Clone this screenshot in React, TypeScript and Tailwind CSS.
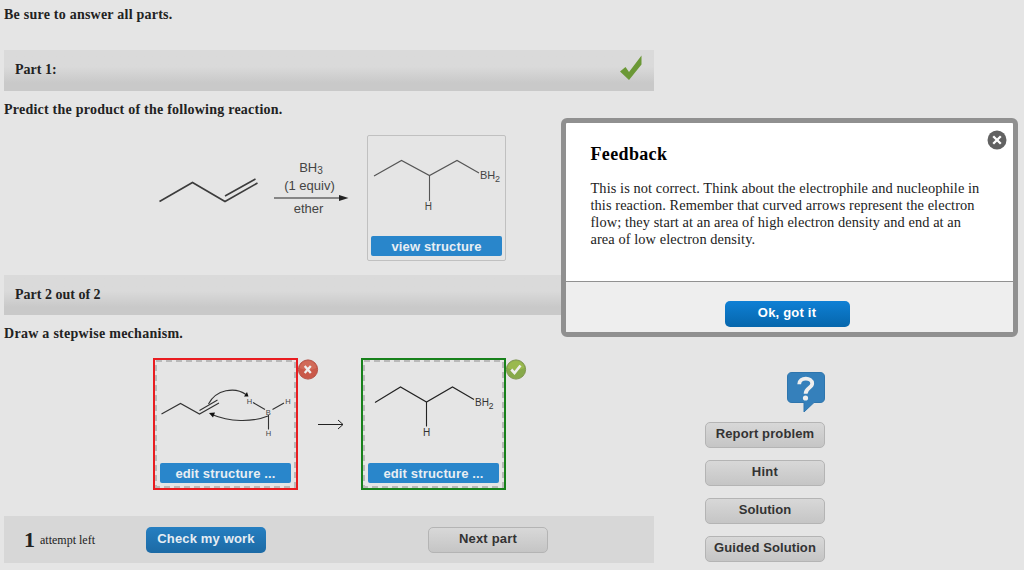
import React from "react";

const sideButtons = [
  { label: "Report problem", spacing: "tracking-[0.12px]" },
  { label: "Hint", spacing: "tracking-[0.3px]" },
  { label: "Solution", spacing: "tracking-[0.05px]" },
  { label: "Guided Solution", spacing: "tracking-[0.1px]" },
];

function PartBar({ title, height, children }: { title: string; height: string; children?: React.ReactNode }) {
  return (
    <div className={`${height} flex items-start justify-between bg-linear-to-b from-[#dadada] from-40% to-[#c9c9c9] to-80% pl-[11px] pr-[11px]`}>
      <h2 className="mt-3 text-[14px] font-bold leading-4 text-[#222]">{title}</h2>
      {children}
    </div>
  );
}

function GrayButton({ label, spacing }: { label: string; spacing: string }) {
  return (
    <button className={`${spacing} h-[26px] w-[120px] shrink-0 whitespace-nowrap rounded-[5px] border border-[#b4b4b4] bg-linear-to-b from-[#d8d8d8] to-[#c5c5c5] pb-0.5 font-['Liberation_Sans',sans-serif] text-[13px] font-bold leading-5 text-[#333]`}>
      {label}
    </button>
  );
}

function StructureButton({ label }: { label: string }) {
  return (
    <button className="block h-5 w-[131px] rounded-[2px] bg-[#2986cb] font-['Liberation_Sans',sans-serif] text-[13px] font-bold leading-[19px] tracking-[0.15px] text-[#e8eef3]">
      {label}
    </button>
  );
}

function Butene() {
  return (
    <svg width="105" height="30" viewBox="0 0 105 30" fill="none" stroke="#3c3c3c" strokeWidth="1.6">
      <path d="M4.5 25.5 37.5 6.5 70 25.5 102.5 7M70 20 100.5 3" />
    </svg>
  );
}

function Borane({ boxed }: { boxed?: boolean }) {
  if (boxed) {
    return (
      <svg className="block" width="138" height="95" viewBox="365 361.5 138 95">
        <path d="M375 402 400.5 386.5 426.5 401.5 452.5 386.5 474 399M426.5 401.5V426" fill="none" stroke="#222" strokeWidth="1.1" />
        <g fill="#333" fontFamily="Liberation Sans, sans-serif" fontSize="10">
          <text x="475" y="405.5">BH</text>
          <text x="488.8" y="408.5" fontSize="8.5">2</text>
          <text x="422.9" y="435">H</text>
        </g>
      </svg>
    );
  }
  return (
    <svg className="block" width="137" height="98" viewBox="368 136 137 98">
      <path d="M374 176 401.5 160.5 429.5 175.5 457 160.5 479 173M429.5 175.5V201" fill="none" stroke="#555" strokeWidth="1.1" />
      <g fill="#444" fontFamily="Liberation Sans, sans-serif" fontSize="11">
        <text x="480" y="178.5">BH</text>
        <text x="495" y="181.5" fontSize="9">2</text>
        <text x="424.8" y="210" fontSize="10">H</text>
      </g>
    </svg>
  );
}

function CurvedArrows() {
  return (
    <svg className="block" width="138" height="95" viewBox="157 361.5 138 95">
      <g fill="none" stroke="#333" strokeWidth="1.1">
        <path d="M161.5 413.5 180.5 403 199.5 413.5 219 402.5M199.5 410 217.5 399.5" />
        <path d="M208.5 403.5C216 389 235 386 246 394M268 415.5C252 422 229 421.5 212 414" />
        <path d="M253 402 265 409M272.5 409 284 402.5M268.5 414.5V429" />
      </g>
      <path d="M248.5 396 244 396 247 391.5ZM209 412.5 215 412 213 417Z" fill="#111" />
      <g fill="#444" fontFamily="Liberation Sans, sans-serif" fontSize="7.5">
        <text x="246.7" y="403.5">H</text>
        <text x="285.2" y="403.5">H</text>
        <text x="265.8" y="414.5">B</text>
        <text x="265.8" y="435.7">H</text>
      </g>
    </svg>
  );
}

function AnswerBox({ wrong, children }: { wrong?: boolean; children: React.ReactNode }) {
  return (
    <div className={`${wrong ? "border-[#e91c20]" : "border-[#17811b]"} relative h-[132px] w-[145px] border-2`}>
      <svg className="absolute inset-0" width="141" height="128" fill="none">
        <rect x="1" y="1" width="139" height="126" stroke="#b9b9b9" strokeWidth="2" strokeDasharray="6 4" />
      </svg>
      <div className="flex flex-col items-center pt-0.5">
        {children}
        <div className="mt-[6px]">
          <StructureButton label="edit structure ..." />
        </div>
      </div>
      <svg className="absolute -right-[23px] -top-[2px]" width="22" height="22" viewBox="0 0 22 22">
        <circle cx="11" cy="11.5" r="9.6" fill={wrong ? "#c95849" : "#87a94a"} stroke={wrong ? "#b55247" : "#80964f"} />
        <path d="M2.5 10a8.6 8.6 0 0 1 17 0Q11 14 2.5 10Z" fill={wrong ? "#d16a58" : "#9ab94e"} />
        {wrong ? (
          <path d="m7.7 8 6.1 7m0-7-6.1 7" stroke="#eee" strokeWidth="2.3" />
        ) : (
          <path d="m6.3 11.5 3.2 3.5 6-7.5" fill="none" stroke="#eee" strokeWidth="2.7" />
        )}
      </svg>
    </div>
  );
}

function FeedbackDialog() {
  return (
    <div role="dialog" className="absolute left-[561px] top-[118px] flex h-[219px] w-[457px] flex-col overflow-hidden rounded-md border-[5px] border-[#909090] bg-white">
      <svg className="absolute right-[6.5px] top-[6.5px]" width="20" height="20" viewBox="0 0 20 20">
        <circle cx="10" cy="10" r="9.5" fill="#626262" />
        <path d="m6.2 6.2 7.6 7.6m0-7.6-7.6 7.6" stroke="#fff" strokeWidth="2.3" />
      </svg>
      <div className="h-[159px] shrink-0 border-b border-[#919191] pl-[24.5px] pt-[21px]">
        <h3 className="text-[18px] font-bold leading-5 tracking-[0.35px] text-black">Feedback</h3>
        <p className="mt-[16px] whitespace-nowrap text-[14.4px] leading-[17px] tracking-[0.075px] text-[#222]">
          This is not correct. Think about the electrophile and nucleophile in<br />
          this reaction. Remember that curved arrows represent the electron<br />
          flow; they start at an area of high electron density and end at an<br />
          area of low electron density.
        </p>
      </div>
      <div className="flex grow items-start justify-center bg-[#eee] pr-[5px] pt-[19px]">
        <button className="h-[26px] w-[125px] rounded-[5px] bg-linear-to-b from-[#0f80d5] to-[#0666ac] pb-0.5 font-['Liberation_Sans',sans-serif] text-[13px] font-bold leading-5 tracking-[0.2px] text-white">
          Ok, got it
        </button>
      </div>
    </div>
  );
}

export default function App() {
  return (
    <div className="relative flex h-[570px] w-[1024px] overflow-hidden bg-[#e5e5e5] pl-1 font-['Liberation_Serif',serif] text-[#222]">
      <main className="w-[650px] shrink-0">
        <p className="h-[50px] pt-[7px] text-[14px] font-bold leading-4 tracking-[0.23px]">Be sure to answer all parts.</p>
        <PartBar title="Part 1:" height="h-[41px]">
          <svg className="mt-[5px]" width="24" height="27" viewBox="0 0 24 27">
            <path d="M1 16.5 6.5 12 10 17 22.5.5V9.5L10 25Z" fill="#6b9836" />
          </svg>
        </PartBar>
        <p className="h-11 pt-[11px] text-[14px] font-bold leading-4 tracking-[0.23px]">Predict the product of the following reaction.</p>

        <section className="flex h-[140px] items-start">
          <div className="ml-[151px] mt-[41px]">
            <Butene />
          </div>
          <div className="ml-[14px] mt-[24px] flex w-[76px] flex-col items-center font-['Liberation_Sans',sans-serif] text-[13px] leading-[17px] text-[#444]">
            <span className="-ml-[2px]">BH<span className="relative top-0.5 text-[10px]">3</span></span>
            <span className="-ml-[5px]">(1 equiv)</span>
            <svg width="76" height="8" viewBox="0 0 76 8">
              <path d="M0 4H67" stroke="#666" strokeWidth="1.3" />
              <path d="m65 1 9.5 3-9.5 3Z" fill="#222" />
            </svg>
            <span className="-ml-[7px] -mt-[2px]">ether</span>
          </div>
          <div className="ml-[17px] flex h-[126px] w-[139px] flex-col items-center rounded-[2px] border border-[#c0c0c0]">
            <Borane />
            <div className="mt-[2px]">
              <StructureButton label="view structure" />
            </div>
          </div>
        </section>

        <PartBar title="Part 2 out of 2" height="h-10" />
        <p className="h-[43px] pt-[11px] text-[14px] font-bold leading-4 tracking-[0.28px]">Draw a stepwise mechanism.</p>

        <section className="flex h-[158px] items-start pl-[149px]">
          <AnswerBox wrong>
            <CurvedArrows />
          </AnswerBox>
          <svg className="ml-5 mt-[60px]" width="26" height="12" viewBox="0 0 26 12" fill="none" stroke="#222">
            <path d="M0 6.5h25M20 2l5 4.5-5 4.5" />
          </svg>
          <div className="ml-[17px]">
            <AnswerBox>
              <Borane boxed />
            </AnswerBox>
          </div>
        </section>

        <footer className="flex h-[47px] items-center bg-[#d7d7d7] pl-[20px]">
          <div className="flex w-[122px] items-center gap-[5px]">
            <strong className="text-[22px] leading-6">1</strong>
            <span className="text-[12px] leading-4">attempt left</span>
          </div>
          <button className="h-[26px] w-[120px] whitespace-nowrap rounded-[5px] bg-linear-to-b from-[#267fc1] to-[#1c6aa5] pb-0.5 font-['Liberation_Sans',sans-serif] text-[13px] font-bold leading-5 tracking-[0.15px] text-[#e6edf3]">
            Check my work
          </button>
          <div className="ml-[162px] flex">
            <GrayButton label="Next part" spacing="tracking-[0.2px]" />
          </div>
        </footer>
      </main>

      <aside className="ml-[51px] flex w-[120px] flex-col items-end gap-3 pt-[372px]">
        <svg className="-mb-[2px] shrink-0" width="38" height="40" viewBox="0 0 38 40">
          <path d="M5 .5H33Q37.5.5 37.5 5V26Q37.5 30.5 33 30.5H27L17 40V30.5H5Q.5 30.5.5 26V5Q.5.5 5 .5Z" fill="#3580bb" stroke="#2e75ad" />
          <path d="M12.2 12.2C12.2 4.8 25.2 4.8 25.2 11.5 25.2 16 18.6 15.5 18.6 21.8" fill="none" stroke="#eee" strokeWidth="3.8" />
          <circle cx="18.5" cy="26" r="2.6" fill="#eee" />
        </svg>
        {sideButtons.map((button) => (
          <GrayButton key={button.label} label={button.label} spacing={button.spacing} />
        ))}
      </aside>
      <FeedbackDialog />
    </div>
  );
}
